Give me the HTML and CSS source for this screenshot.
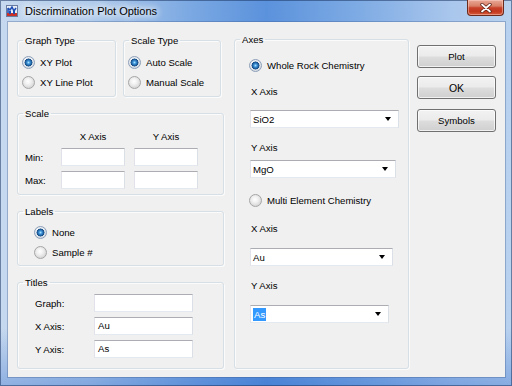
FILE: index.html
```html
<!DOCTYPE html>
<html>
<head>
<meta charset="utf-8">
<link rel="stylesheet" href="styles.css">
</head>
<body>
<div class="window">
  <div class="titlebar">
    <svg class="app-icon" width="12" height="12" viewBox="0 0 12 12">
      <rect x="0.5" y="0.5" width="11" height="11" fill="#e8eef8" stroke="#6a7da0" stroke-width="1"/>
      <path d="M2 9 L2 3 M2 3 L4 5 L6 2 L8 6 L10 3" fill="none" stroke="#1f4fb5" stroke-width="1.6"/>
      <rect x="1" y="8" width="10" height="3" fill="#c8302a"/>
      <rect x="3" y="6" width="2" height="3" fill="#1f4fb5"/>
      <rect x="7" y="5" width="2" height="4" fill="#1f4fb5"/>
    </svg>
    <span class="title">Discrimination Plot Options</span>
    <div class="close">
      <svg width="14" height="10" viewBox="0 0 14 10">
        <path d="M3 1.5 L11 8.5 M11 1.5 L3 8.5" stroke="#5b2218" stroke-width="3.4" stroke-linecap="round"/>
        <path d="M3 1.5 L11 8.5 M11 1.5 L3 8.5" stroke="#ffffff" stroke-width="1.8" stroke-linecap="round"/>
      </svg>
    </div>
  </div>
  <div class="client">
    <div class="left-col">
      <div class="top-row">
        <fieldset class="group group-graph">
          <legend>Graph Type</legend>
          <div class="radio-list">
            <label class="radio-row"><span class="radio checked"></span><span>XY Plot</span></label>
            <label class="radio-row"><span class="radio"></span><span>XY Line Plot</span></label>
          </div>
        </fieldset>
        <fieldset class="group group-scaletype">
          <legend>Scale Type</legend>
          <div class="radio-list">
            <label class="radio-row"><span class="radio checked"></span><span>Auto Scale</span></label>
            <label class="radio-row"><span class="radio"></span><span>Manual Scale</span></label>
          </div>
        </fieldset>
      </div>
      <fieldset class="group group-scale">
        <legend>Scale</legend>
        <div class="scale-grid">
          <span></span><span class="col-head">X Axis</span><span class="col-head">Y Axis</span>
          <span class="row-label">Min:</span><span class="textbox"></span><span class="textbox"></span>
          <span class="row-label">Max:</span><span class="textbox"></span><span class="textbox"></span>
        </div>
      </fieldset>
      <fieldset class="group group-labels">
        <legend>Labels</legend>
        <div class="radio-list labels-list">
          <label class="radio-row"><span class="radio checked"></span><span>None</span></label>
          <label class="radio-row"><span class="radio"></span><span>Sample #</span></label>
        </div>
      </fieldset>
      <fieldset class="group group-titles">
        <legend>Titles</legend>
        <div class="titles-grid">
          <span class="row-label">Graph:</span><span class="textbox wide"></span>
          <span class="row-label">X Axis:</span><span class="textbox wide">Au</span>
          <span class="row-label">Y Axis:</span><span class="textbox wide">As</span>
        </div>
      </fieldset>
    </div>
    <fieldset class="group group-axes">
      <legend>Axes</legend>
      <div class="axes-body">
        <label class="radio-row r-whole"><span class="radio checked"></span><span>Whole Rock Chemistry</span></label>
        <div class="axis-label l-x1">X Axis</div>
        <div class="combo c-sio2"><span>SiO2</span><span class="arrow"></span></div>
        <div class="axis-label l-y1">Y Axis</div>
        <div class="combo c-mgo"><span>MgO</span><span class="arrow"></span></div>
        <label class="radio-row r-multi"><span class="radio"></span><span>Multi Element Chemistry</span></label>
        <div class="axis-label l-x2">X Axis</div>
        <div class="combo c-au"><span>Au</span><span class="arrow"></span></div>
        <div class="axis-label l-y2">Y Axis</div>
        <div class="combo c-as"><span class="selected">As</span><span class="arrow"></span></div>
      </div>
    </fieldset>
    <div class="buttons">
      <div class="btn b-plot">Plot</div>
      <div class="btn b-ok">OK</div>
      <div class="btn b-sym">Symbols</div>
    </div>
  </div>
</div>
</body>
</html>
```

FILE: styles.css
```css
* { box-sizing: border-box; }
html, body { margin: 0; padding: 0; }
body {
  width: 512px;
  height: 386px;
  overflow: hidden;
  font-family: "Liberation Sans", Arial, sans-serif;
  font-size: 9.6px;
  color: #000;
}
.window {
  width: 512px;
  height: 386px;
  display: flex;
  flex-direction: column;
  background:
    linear-gradient(to bottom, rgba(255,255,255,0) 0%, rgba(255,255,255,0) 85%, rgba(40,100,200,0.35) 100%),
    linear-gradient(to right, #c6d9ef 0%, #b0cbeb 18%, #79a7e2 38%, #5b92dc 52%, #7eabe4 70%, #a9c6ec 88%, #b9d2ef 100%);
  box-shadow: inset 0 0 0 1px rgba(30,55,100,0.55);
}
.titlebar {
  height: 22px;
  display: flex;
  align-items: center;
  padding: 0 0 1px 6px;
  position: relative;
}
.app-icon { flex: none; }
.title {
  margin-left: 7px;
  font-family: "Liberation Sans", Arial, sans-serif;
  font-size: 11px;
  color: #000;
  text-shadow: 0 0 6px #fff, 0 0 8px #fff, 0 0 10px rgba(255,255,255,0.8);
}
.close {
  margin-left: auto;
  margin-right: 8px;
  align-self: flex-start;
  width: 37px;
  height: 16px;
  border: 1px solid #6b2a1c;
  border-top: none;
  border-radius: 0 0 4px 4px;
  background: linear-gradient(to bottom, #e9a897 0%, #d98068 40%, #c8412a 52%, #c2381f 75%, #d65a3c 100%);
  box-shadow: inset 0 0 0 1px rgba(255,220,210,0.45);
  display: flex;
  align-items: center;
  justify-content: center;
}
.client {
  flex: 1;
  margin: 0 7px 9px 8px;
  background: #f0f0f0;
  display: flex;
  align-items: flex-start;
  padding: 12px 0 0 9px;
  box-shadow: 0 0 0 1px rgba(60,90,140,0.35);
}
.left-col {
  width: 207px;
  display: flex;
  flex-direction: column;
  gap: 10px;
}
.top-row {
  display: flex;
  gap: 7px;
}
.group {
  margin: 0;
  padding: 0;
  min-width: 0;
  border: 1px solid #d5dfe5;
  border-radius: 3px;
  box-shadow: inset 1px 1px 0 #fbfbfb, 1px 1px 0 #fbfbfb;
}
.group legend {
  margin-left: 5px;
  padding: 0 2px;
  line-height: 13px;
  height: 13px;
}
.group-graph { width: 99px; height: 63px; }
.group-scaletype { width: 98px; height: 63px; }
.group-scale { height: 88px; }
.group-labels { height: 61px; }
.group-titles { height: 93px; }

.radio-list {
  padding: 5px 0 0 4px;
  display: flex;
  flex-direction: column;
}
.labels-list { padding: 4px 0 0 16px; }
.radio-row {
  height: 20px;
  display: flex;
  align-items: center;
  white-space: nowrap;
}
.radio {
  width: 13px;
  height: 13px;
  margin-right: 5px;
  border-radius: 50%;
  border: 1px solid #a6a6a6;
  background: radial-gradient(circle at 45% 40%, #ffffff 0%, #f0f0f0 35%, #d6d6d6 75%, #c4c4c4 100%);
  flex: none;
}
.radio.checked {
  border-color: #8d9fb8;
  background:
    radial-gradient(circle at 50% 50%, #a9e2ff 0px, #3b92d6 1.6px, #1f5f9f 3px, #17497e 3.8px, rgba(255,255,255,0) 4.2px),
    radial-gradient(circle at 45% 40%, #ffffff 0%, #eef1f5 40%, #cdd5de 80%, #bcc5d0 100%);
}

.scale-grid {
  display: grid;
  grid-template-columns: 27px 64px 64px;
  grid-template-rows: 13px 18px 18px;
  column-gap: 9px;
  row-gap: 5px;
  padding: 10px 0 0 7px;
  align-items: center;
}
.scale-grid > .textbox:nth-child(5), .scale-grid > .textbox:nth-child(6) { margin-top: -1px; }
.col-head { text-align: center; line-height: 13px; }
.row-label { line-height: 13px; white-space: nowrap; }
.textbox {
  height: 18px;
  background: #fff;
  border: 1px solid;
  border-color: #abadb3 #dbdfe6 #e3e9ef #e2e3ea;
  padding: 0 3px;
  line-height: 16px;
  display: block;
}
.textbox.wide { width: 99px; }

.titles-grid {
  display: grid;
  grid-template-columns: 59px 99px;
  grid-auto-rows: 18px;
  row-gap: 5px;
  padding: 5px 0 0 17px;
  align-items: center;
}

.group-axes {
  width: 175px;
  height: 336px;
  margin-left: 10px;
  margin-top: -1px;
}
.axes-body {
  display: flex;
  flex-direction: column;
  align-items: flex-start;
  padding-top: 9px;
}
.axes-body .radio-row { margin-left: 14px; }
.axis-label { margin-left: 16px; line-height: 13px; height: 13px; }
.combo {
  margin-left: 15px;
  height: 18px;
  background: #fff;
  border: 1px solid;
  border-color: #abadb3 #dbdfe6 #e3e9ef #e2e3ea;
  display: flex;
  align-items: center;
  justify-content: space-between;
  padding: 0 7px 0 2px;
}
.arrow {
  width: 0;
  height: 0;
  border-left: 3.5px solid transparent;
  border-right: 3.5px solid transparent;
  border-top: 4px solid #000;
}
.selected { background: #3399ff; color: #fff; padding: 0 1px; line-height: 13px; }
.l-x1 { margin-top: 10px; }
.c-sio2 { margin-top: 12px; width: 149px; }
.l-y1 { margin-top: 13px; }
.c-mgo { margin-top: 6px; width: 146px; }
.r-multi { margin-top: 12px; }
.l-x2 { margin-top: 12px; }
.c-au { margin-top: 13px; width: 143px; }
.l-y2 { margin-top: 13px; }
.c-as { margin-top: 13px; width: 139px; }

.buttons {
  margin-left: 8px;
  margin-top: 11px;
  width: 79px;
  display: flex;
  flex-direction: column;
}
.btn {
  height: 23px;
  border: 1px solid #707070;
  border-radius: 3px;
  background: linear-gradient(to bottom, #f2f2f2 0%, #ebebeb 48%, #dddddd 52%, #cfcfcf 100%);
  box-shadow: inset 0 0 0 1px rgba(255,255,255,0.7);
  display: flex;
  align-items: center;
  justify-content: center;
  font-size: 9.6px;
}
.b-ok { margin-top: 8px; font-size: 10.5px; }
.b-sym { margin-top: 10px; }
```
